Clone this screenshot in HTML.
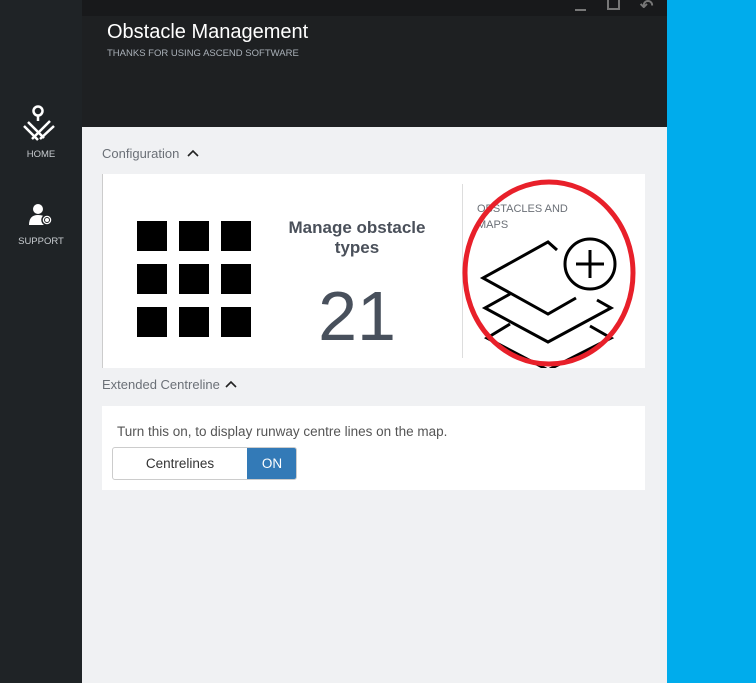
<!DOCTYPE html>
<html><head><style>
*{margin:0;padding:0;box-sizing:border-box}
body{width:756px;height:683px;position:relative;overflow:hidden;font-family:"Liberation Sans",sans-serif;background:#f0f1f3}
.a{position:absolute}
</style></head><body>
<div class="a" style="left:0;top:0;width:82px;height:683px;background:#1f2326"></div>
<div class="a" style="left:82px;top:0;width:585px;height:16px;background:#18191b"></div>
<div class="a" style="left:82px;top:16px;width:585px;height:111px;background:#1e2022"></div>
<div class="a" style="left:667px;top:0;width:89px;height:683px;background:#00acec"></div>
<div class="a" style="left:575px;top:9px;width:11px;height:2px;background:#777"></div>
<div class="a" style="left:607px;top:-2px;width:13px;height:12px;border:2px solid #777"></div>
<div class="a" style="left:640px;top:-4px;color:#777;font-size:16px;font-weight:bold">↶</div>
<div class="a" style="left:107px;top:21px;color:#fff;font-size:20px">Obstacle Management</div>
<div class="a" style="left:107px;top:48px;color:#a9b0b8;font-size:9.5px">THANKS FOR USING ASCEND SOFTWARE</div>
<svg class="a" style="left:20px;top:104px" width="36" height="40" viewBox="0 0 36 40" fill="none" stroke="#fff" stroke-width="2.5">
<circle cx="18" cy="7" r="4.5"/><path d="M18 11.5 L18 17"/><path d="M4 22 L18 36 M8 18 L24 34 M30 17 L12 35 M34 22 L20 35"/></svg>
<div class="a" style="left:0;top:149px;width:82px;text-align:center;color:#c8ccd0;font-size:9.5px">HOME</div>
<svg class="a" style="left:27px;top:203px" width="28" height="24" viewBox="0 0 28 24"><circle cx="11" cy="6" r="5" fill="#fff"/><path d="M2 22 Q2 12 11 12 Q18 12 19 16 L19 22Z" fill="#fff"/><circle cx="20" cy="17" r="5" fill="#fff" stroke="#1f2326" stroke-width="1.5"/><circle cx="20" cy="17" r="2.5" fill="none" stroke="#1f2326" stroke-width="1"/></svg>
<div class="a" style="left:0;top:236px;width:82px;text-align:center;color:#c8ccd0;font-size:9.5px">SUPPORT</div>
<div class="a" style="left:102px;top:146px;color:#6b7077;font-size:13px">Configuration</div>
<svg class="a" style="left:187px;top:149px" width="12" height="10"><path d="M1 7 L6 2 L11 7" fill="none" stroke="#222" stroke-width="1.6"/></svg>
<div class="a" style="left:102px;top:174px;width:543px;height:194px;background:#fff;border-left:1px solid #ccc"></div>
<div class="a" style="left:137px;top:221px;width:114px;height:116px;background:
linear-gradient(#000,#000) 0 0/30px 30px no-repeat,linear-gradient(#000,#000) 42px 0/30px 30px no-repeat,linear-gradient(#000,#000) 84px 0/30px 30px no-repeat,
linear-gradient(#000,#000) 0 43px/30px 30px no-repeat,linear-gradient(#000,#000) 42px 43px/30px 30px no-repeat,linear-gradient(#000,#000) 84px 43px/30px 30px no-repeat,
linear-gradient(#000,#000) 0 86px/30px 30px no-repeat,linear-gradient(#000,#000) 42px 86px/30px 30px no-repeat,linear-gradient(#000,#000) 84px 86px/30px 30px no-repeat"></div>
<div class="a" style="left:277px;top:218px;width:160px;text-align:center;color:#4a505a;font-size:17px;font-weight:bold;line-height:20px">Manage obstacle<br>types</div>
<div class="a" style="left:277px;top:276px;width:160px;text-align:center;color:#48505c;font-size:70px;line-height:80px">21</div>
<div class="a" style="left:462px;top:184px;width:1px;height:174px;background:#ddd"></div>
<div class="a" style="left:477px;top:201px;color:#6b7077;font-size:11px;line-height:16px">OBSTACLES AND<br>MAPS</div>
<svg class="a" style="left:460px;top:174px" width="185" height="194" viewBox="460 174 185 194" fill="none">
<g stroke="#000" stroke-width="3">
<path d="M557 250 L548 242 L483 278 L548 314 L576 298"/>
<path d="M597 300 L611 308 L548 342 L485 308 L510 294"/>
<path d="M590 326 L611 338 L548 370 L487 338 L510 324"/>
<circle cx="590" cy="264" r="25"/><path d="M590 250 V278 M576 264 H604"/></g>
<ellipse cx="549" cy="273" rx="84" ry="91" stroke="#e8202a" stroke-width="5"/>
</svg>
<div class="a" style="left:102px;top:377px;color:#6b7077;font-size:13px">Extended Centreline</div>
<svg class="a" style="left:225px;top:380px" width="12" height="10"><path d="M1 7 L6 2 L11 7" fill="none" stroke="#222" stroke-width="1.6"/></svg>
<div class="a" style="left:102px;top:406px;width:543px;height:84px;background:#fff"></div>
<div class="a" style="left:117px;top:424px;color:#555;font-size:13.5px">Turn this on, to display runway centre lines on the map.</div>
<div class="a" style="left:112px;top:447px;width:185px;height:33px;border:1px solid #ccc;border-radius:3px;background:#fff;overflow:hidden">
<div class="a" style="left:0;top:0;width:134px;height:31px;line-height:31px;text-align:center;color:#333;font-size:13.5px">Centrelines</div>
<div class="a" style="left:134px;top:0;width:50px;height:31px;line-height:31px;text-align:center;color:#fff;background:#337ab7;font-size:13.5px">ON</div>
</div>
</body></html>
